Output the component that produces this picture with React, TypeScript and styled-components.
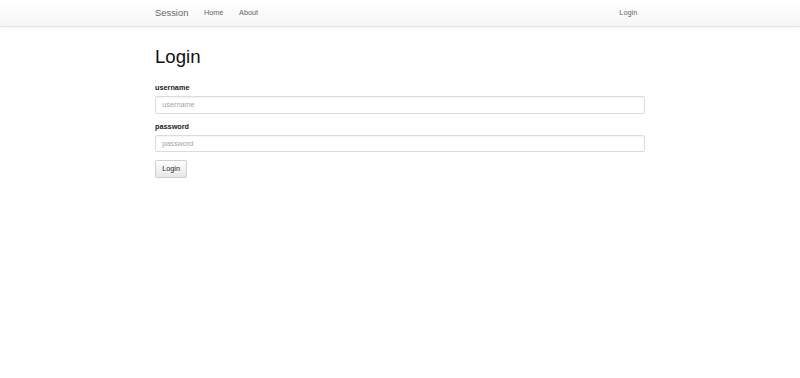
import * as React from "react";
import styled, { createGlobalStyle } from "styled-components";

const GlobalStyle = createGlobalStyle`
  html, body {
    margin: 0;
    padding: 0;
    background: #fff;
  }
  body {
    font-family: "Liberation Sans", Arial, Helvetica, sans-serif;
    font-size: 7.3px;
    line-height: 1.43;
    color: #333;
  }
  * {
    box-sizing: border-box;
  }
`;

const Navbar = styled.nav`
  height: 27px;
  background-image: linear-gradient(to bottom, #fff 0, #f6f6f6 100%);
  border-bottom: 1px solid #e7e7e7;
  box-shadow: inset 0 1px 0 rgba(255, 255, 255, 0.15), 0 1px 3px rgba(0, 0, 0, 0.06);
`;

const Container = styled.div`
  width: 490px;
  margin: 0 auto;
`;

const NavInner = styled(Container)`
  display: flex;
  align-items: center;
  height: 26px;
`;

const Brand = styled.a`
  font-size: 9.4px;
  color: #666;
  text-decoration: none;
  padding: 0 7.8px;
  margin-left: -7.8px;
  line-height: 26px;
`;

const NavList = styled.ul<{ $right?: boolean }>`
  display: flex;
  list-style: none;
  margin: 0;
  padding: 0;
  margin-left: ${(p) => (p.$right ? "auto" : "0")};
`;

const NavLink = styled.a`
  display: block;
  padding: 0 7.8px;
  line-height: 26px;
  color: #666;
  text-decoration: none;
`;

const Heading = styled.h1`
  font-size: 18.6px;
  font-weight: 400;
  line-height: 1.1;
  color: #111;
  margin: 20px 0 15.6px;
`;

const FormGroup = styled.div`
  margin-bottom: 7.8px;
`;

const Label = styled.label`
  display: block;
  font-weight: 700;
  color: #222;
  margin-bottom: 2.6px;
`;

const Input = styled.input`
  display: block;
  width: 100%;
  height: 17.7px;
  padding: 3px 6.2px;
  font-family: inherit;
  font-size: 7.3px;
  color: #555;
  background: #fff;
  border: 1px solid #dcdcdc;
  border-radius: 2px;
  box-shadow: inset 0 1px 1px rgba(0, 0, 0, 0.04);
  outline: none;

  &::placeholder {
    color: #a5a5a5;
  }
`;

const Button = styled.button`
  display: inline-block;
  height: 17.7px;
  padding: 0 6.2px;
  font-family: inherit;
  font-size: 7.3px;
  color: #222;
  background-image: linear-gradient(to bottom, #fff 0, #e6e6e6 100%);
  border: 1px solid #d0d0d0;
  border-radius: 2px;
  text-shadow: 0 1px 0 #fff;
  box-shadow: 0 1px 1px rgba(0, 0, 0, 0.06);
  cursor: pointer;
`;

export default function App() {
  return (
    <>
      <GlobalStyle />
      <Navbar>
        <NavInner>
          <Brand href="#">Session</Brand>
          <NavList>
            <li>
              <NavLink href="#">Home</NavLink>
            </li>
            <li>
              <NavLink href="#">About</NavLink>
            </li>
          </NavList>
          <NavList $right>
            <li>
              <NavLink href="#">Login</NavLink>
            </li>
          </NavList>
        </NavInner>
      </Navbar>
      <Container>
        <Heading>Login</Heading>
        <form onSubmit={(e) => e.preventDefault()}>
          <FormGroup>
            <Label htmlFor="username">username</Label>
            <Input id="username" type="text" placeholder="username" />
          </FormGroup>
          <FormGroup>
            <Label htmlFor="password">password</Label>
            <Input id="password" type="password" placeholder="password" />
          </FormGroup>
          <Button type="submit">Login</Button>
        </form>
      </Container>
    </>
  );
}
